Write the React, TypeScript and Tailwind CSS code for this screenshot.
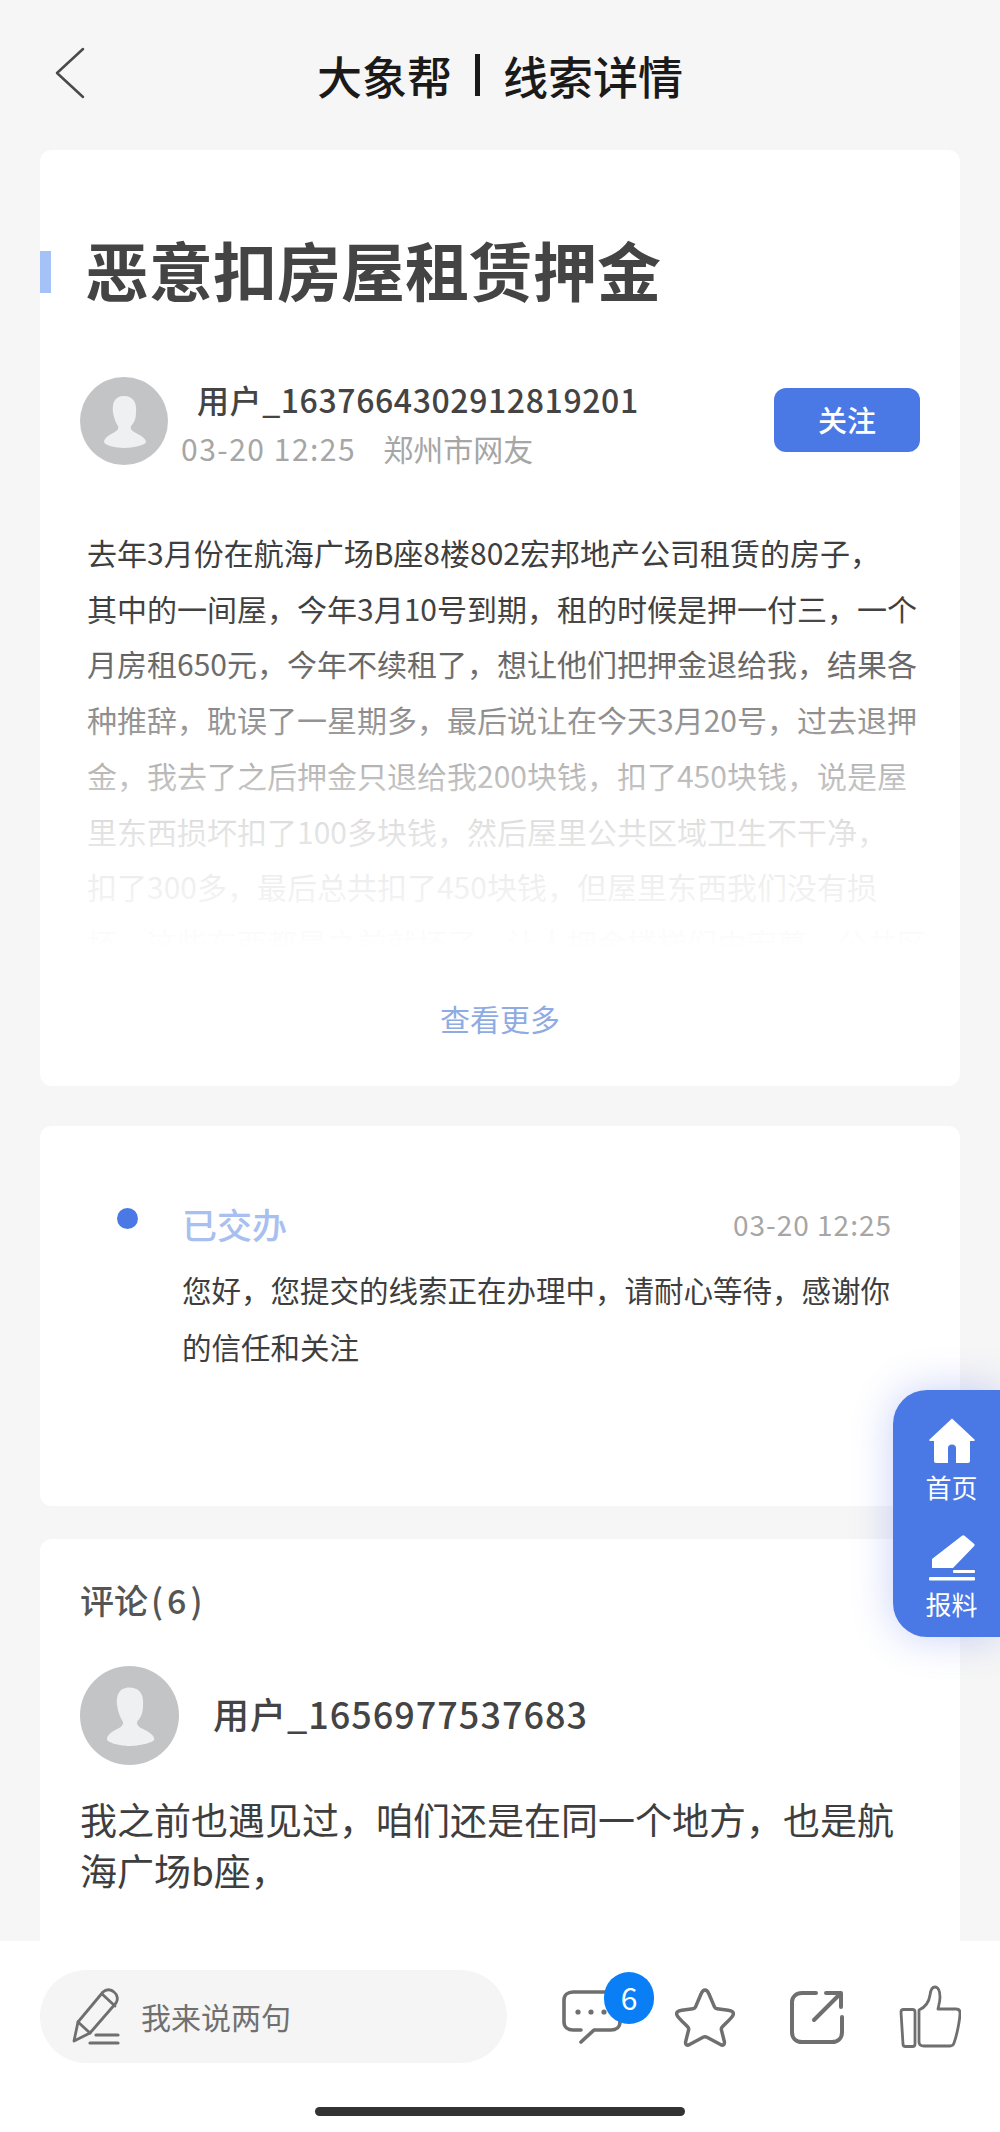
const FONT = "font-['Noto_Sans_CJK_SC','Noto_Sans',sans-serif]";

const BODY_LINES = [
  "去年3月份在航海广场B座8楼802宏邦地产公司租赁的房子，",
  "其中的一间屋，今年3月10号到期，租的时候是押一付三，一个",
  "月房租650元，今年不续租了，想让他们把押金退给我，结果各",
  "种推辞，耽误了一星期多，最后说让在今天3月20号，过去退押",
  "金，我去了之后押金只退给我200块钱，扣了450块钱，说是屋",
  "里东西损坏扣了100多块钱，然后屋里公共区域卫生不干净，",
  "扣了300多，最后总共扣了450块钱，但屋里东西我们没有损",
  "坏，这些东西都是之前就坏了，让人押金楼梯们由宏尊，公共区",
];

function Avatar({ size }: { size: string }) {
  return (
    <svg viewBox="0 0 88 88" className={`${size} shrink-0`}>
      <circle cx="44" cy="44" r="44" fill="#c3c4c6" />
      <path
        d="M44 19c-10 0-12 8-11 16 1 7 3 11 5 14 1 3-1 5-5 7-6 3-9 6-9 9 0 3 12 6 20 6s22-3 22-6c0-3-4-6-10-9-4-2-6-4-5-7 3-3 5-7 5-14 1-8-2-16-12-16z"
        fill="#eff0f1"
      />
    </svg>
  );
}

function HomeIcon() {
  return (
    <svg viewBox="0 0 46 46" className="w-[46px] h-[46px]" fill="#fff">
      <path d="M23 0.500 45.500 21.500c.6.7.2 1.500-.7 1.500H41v20c0 1.200-.8 2-2 2H27V30c0-2-1.500-3.500-4-3.500s-4 1.500-4 3.500v15H7c-1.200 0-2-.8-2-2V23H1.200c-.9 0-1.300-.8-.7-1.500z" />
    </svg>
  );
}

function ReportIcon() {
  return (
    <svg viewBox="0 0 46 46" className="w-[46px] h-[46px]" fill="#fff">
      <path d="M33 .8c.8-.7 1.800-.7 2.500 0l9.500 8c.8.700.8 1.800 0 2.500L24 33H3V24z" />
      <rect x="24" y="35" width="22" height="3" rx="1" />
      <rect x="0" y="42" width="46" height="3.500" rx="1" />
    </svg>
  );
}

function PenIcon() {
  return (
    <svg viewBox="0 0 48 58" className="w-[48px] h-[58px]" fill="none" stroke="#6f6f6f" strokeWidth="2.800" strokeLinejoin="round" strokeLinecap="round">
      <path d="M2 53 6 34 31 4c3-3 8-3 11 0 4 3 4 8 2 11L18 45z" />
      <path d="M6 34 18 45" />
      <path d="M30 6 43 18" />
      <path d="M24 47H46" strokeWidth="3.200" />
      <path d="M18 55H46" strokeWidth="3.200" />
    </svg>
  );
}

function CommentIcon() {
  return (
    <svg viewBox="0 0 60 56" className="w-[60px] h-[56px]" fill="none" stroke="#6f6f6f" strokeWidth="3.600" strokeLinecap="round" strokeLinejoin="round">
      <path d="M44 3H11C6 3 2 6 2 11v22c0 5 4 8 9 8h8M58 30v3c0 5-4 8-9 8H32l-13 12" />
      <circle cx="16" cy="23" r="2.600" fill="#6f6f6f" stroke="none" />
      <circle cx="29" cy="23" r="2.600" fill="#6f6f6f" stroke="none" />
      <circle cx="42" cy="23" r="2.600" fill="#6f6f6f" stroke="none" />
    </svg>
  );
}

function StarIcon() {
  return (
    <svg viewBox="0 0 62 62" className="w-[60px] h-[60px]" fill="none" stroke="#6f6f6f" strokeWidth="3.600" strokeLinejoin="round">
      <path d="M31 3c2 0 3 1.500 4 4l6 14c.5 1 1 1.500 2.500 1.500L55 24c4 .5 6 2 5 5-1 3-8 9-11 12-1 1-1.500 2-1 3.500l3 12c.5 3-1.500 4.500-4 3L33 52c-1.500-1-2.500-1-4 0l-14 7.500c-2.500 1.500-4.500 0-4-3l3-12c.5-1.500 0-2.500-1-3.500C10 38 3 32 2 29c-1-3 1-4.500 5-5l11.500-1.500C20 22.500 20.500 22 21 21l6-14c1-2.500 2-4 4-4z" />
    </svg>
  );
}

function ShareIcon() {
  return (
    <svg viewBox="0 0 54 56" className="w-[54px] h-[56px]" fill="none" stroke="#6f6f6f" strokeWidth="4" strokeLinecap="round" strokeLinejoin="round">
      <path d="M26 4H12C6 4 2 8 2 13v30c0 6 4 10 10 10h30c6 0 10-4 10-10V28" />
      <path d="M24 31 50 5" />
      <path d="M36 4H51V18" />
    </svg>
  );
}

function ThumbIcon() {
  return (
    <svg viewBox="0 0 62 64" className="w-[62px] h-[64px]" fill="none" stroke="#6f6f6f" strokeWidth="2.800" strokeLinejoin="round">
      <path d="M2 27c0-1.500 1-2.500 2.500-2.500h9c1.500 0 2.500 1 2.500 2.500v32c0 1.500-1 2.500-2.500 2.500h-7C5 61.500 4 60.500 4 59z" />
      <path d="M20 25c7-3 10-8 11-15 .5-4 2-8 5-8s5 4 5 10c0 5-1.500 9-2 12h18c3 0 4 1.500 4 4 0 6-3 22-6 30-.5 2-2 3-4 3H25c-3 0-5-1.500-5-4z" />
    </svg>
  );
}

export default function App() {
  return (
    <div className={`${FONT} relative w-[1000px] h-[2132px] overflow-hidden bg-[#f6f6f6]`}>
      <header className="grid grid-cols-[1fr_auto_1fr] items-center h-[150px] px-[55px]">
        <svg viewBox="0 0 30 52" className="w-[30px] h-[52px] -mt-[5px]" fill="none" stroke="#4a4a4a" strokeWidth="2.500" strokeLinecap="round" strokeLinejoin="round">
          <path d="M28 2 2 26l26 24" />
        </svg>
        <h1 className="flex items-center gap-[23px] text-[45px] leading-none font-medium text-[#1a1a1a] whitespace-nowrap">
          <span>大象帮</span>
          <span className="w-[5px] h-[42px] bg-[#1a1a1a]" />
          <span>线索详情</span>
        </h1>
        <span />
      </header>

      <main className="flex flex-col px-[40px]">
        <section className="h-[936px] bg-white rounded-[12px] pt-[88px]">
          <div className="flex items-center h-[68px]">
            <span className="w-[11px] h-[42px] bg-[#a4c1f8]" />
            <h2 className="ml-[34px] -mt-[9px] text-[64px] leading-none font-bold text-[#444]">恶意扣房屋租赁押金</h2>
          </div>

          <div className="flex items-center mt-[69px] pl-[40px] pr-[40px]">
            <Avatar size="w-[88px] h-[88px]" />
            <div className="flex-1 ml-[13px]">
              <div className="pl-[16px] mt-[4px] text-[32px] leading-[40px] font-medium tracking-[0.6px] text-[#444] whitespace-nowrap">用户_1637664302912819201</div>
              <div className="mt-[11px] flex gap-[27px] text-[30px] leading-[36px] text-[#a6a6a6]">
                <span className="tracking-[1.500px]">03-20 12:25</span>
                <span>郑州市网友</span>
              </div>
            </div>
            <button className="w-[146px] h-[64px] -mt-[2px] rounded-[12px] bg-[#4a79e6] text-white text-[29px] font-medium">关注</button>
          </div>

          <div className="relative mt-[59px] ml-[47px] h-[424px] overflow-hidden text-[30px] leading-[55.700px] text-[#3e3e3e]">
            {BODY_LINES.map((line) => (
              <p key={line} className="whitespace-nowrap">{line}</p>
            ))}
            <div className="absolute inset-x-0 top-[80px] bottom-0 bg-gradient-to-b from-white/0 via-white/85 via-[65%] to-white/100" />
          </div>

          <div className="mt-[49px] text-center text-[30px] leading-[40px] text-[#8fabe3]">查看更多</div>
        </section>

        <section className="h-[380px] mt-[40px] bg-white rounded-[12px] pt-[76px] pl-[77px] pr-[68px]">
          <div className="flex items-start">
            <span className="w-[21px] h-[21px] mt-[6px] rounded-full bg-[#4a79e6]" />
            <div className="flex-1 ml-[44px]">
              <div className="flex items-center justify-between h-[44px]">
                <span className="text-[35px] font-medium text-[#a9bff0]">已交办</span>
                <span className="text-[28px] tracking-[1px] text-[#a6a6a6]">03-20 12:25</span>
              </div>
              <p className="mt-[15px] text-[29.500px] leading-[57px] text-[#3e3e3e] whitespace-nowrap">您好，您提交的线索正在办理中，请耐心等待，感谢你</p>
              <p className="text-[29.500px] leading-[57px] text-[#3e3e3e]">的信任和关注</p>
            </div>
          </div>
        </section>

        <section className="h-[600px] mt-[33px] bg-white rounded-t-[12px] pt-[39px] px-[40px]">
          <div className="flex items-center text-[34px] leading-[44px] font-medium text-[#555]">
            <span>评论</span>
            <span className="ml-[3px] tracking-[4px]">(6)</span>
          </div>
          <div className="flex items-center mt-[44px]">
            <Avatar size="w-[99px] h-[99px]" />
            <span className="ml-[34px] -mt-[6px] text-[36px] font-medium tracking-[1px] text-[#444]">用户_1656977537683</span>
          </div>
          <p className="mt-[29px] text-[37px] leading-[51px] text-[#3e3e3e] whitespace-nowrap">我之前也遇见过，咱们还是在同一个地方，也是航</p>
          <p className="text-[37px] leading-[51px] text-[#3e3e3e]">海广场b座，</p>
        </section>
      </main>

      <aside className="absolute right-0 top-[1390px] w-[107px] h-[247px] flex flex-col items-center pt-[28px] pl-[10px] rounded-l-[34px] bg-[#4a79e6] shadow-[0_0_40px_rgba(74,100,230,0.3)] text-white text-[26px] leading-[32px]">
        <HomeIcon />
        <span className="mt-[7px]">首页</span>
        <div className="mt-[32px]"><ReportIcon /></div>
        <span className="mt-[7px]">报料</span>
      </aside>

      <footer className="absolute inset-x-0 bottom-0 h-[191px] bg-white">
        <div className="flex items-center h-[93px] mt-[29px] ml-[40px]">
          <div className="flex items-center w-[467px] h-full pl-[32px] rounded-full bg-[#f5f5f5]">
            <PenIcon />
            <span className="ml-[21px] text-[30px] text-[#707070]">我来说两句</span>
          </div>
          <div className="relative ml-[55px] w-[60px] h-[56px]">
            <CommentIcon />
            <span className="absolute -top-[17px] left-[42px] flex items-center justify-center w-[50px] h-[52px] rounded-full bg-[#0a7ff5] text-white text-[30px]">6</span>
          </div>
          <div className="ml-[53px]"><StarIcon /></div>
          <div className="ml-[55px]"><ShareIcon /></div>
          <div className="ml-[55px]"><ThumbIcon /></div>
        </div>
        <div className="mx-auto mt-[44px] w-[370px] h-[9px] rounded-full bg-[#333]" />
      </footer>
    </div>
  );
}
